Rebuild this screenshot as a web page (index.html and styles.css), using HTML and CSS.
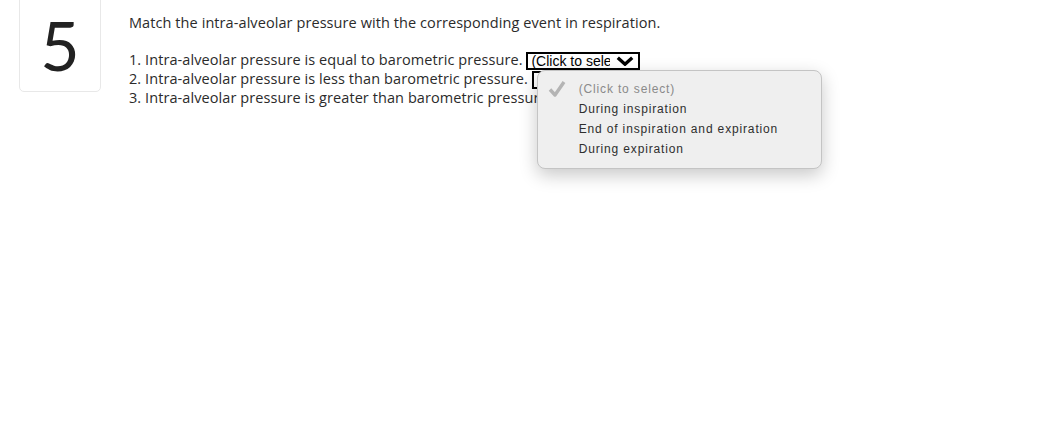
FILE: index.html
```html
<!DOCTYPE html>
<html>
<head>
<meta charset="utf-8">
<link rel="stylesheet" href="styles.css">
</head>
<body>
<div class="question">
  <div class="num-box"><span class="num">5</span></div>
  <div class="content">
    <p class="prompt">Match the intra-alveolar pressure with the corresponding event in respiration.</p>
    <div class="items">
      <div class="item">1. Intra-alveolar pressure is equal to barometric pressure. <span class="select"><span class="select-text">(Click to select)</span><svg class="chev" viewBox="0 0 18 10" width="18" height="10"><path d="M1.8 1.8 L9 8.2 L16.2 1.8" fill="none" stroke="#000" stroke-width="3.4"/></svg></span></div>
      <div class="item">2. Intra-alveolar pressure is less than barometric pressure. <span class="select-wrap"><span class="select"><span class="select-text">(Click to select)</span><svg class="chev" viewBox="0 0 18 10" width="18" height="10"><path d="M1.8 1.8 L9 8.2 L16.2 1.8" fill="none" stroke="#000" stroke-width="3.4"/></svg></span>
        <div class="menu">
          <div class="opt opt-selected"><svg class="check" viewBox="0 0 18 17" width="18" height="17"><path d="M2 9.5 L7 15 L16 2" fill="none" stroke="#b4b4b4" stroke-width="3.4" stroke-linejoin="round"/></svg>(Click to select)</div>
          <div class="opt">During inspiration</div>
          <div class="opt">End of inspiration and expiration</div>
          <div class="opt">During expiration</div>
        </div></span></div>
      <div class="item">3. Intra-alveolar pressure is greater than barometric pressure.</div>
    </div>
  </div>
</div>
</body>
</html>
```
FILE: styles.css
```css
html, body {
  margin: 0;
  padding: 0;
  background: #fff;
}
body {
  min-height: 444px;
  font-family: "Open Sans", Lato, sans-serif;
  color: #2b2b2b;
}
.question {
  display: flex;
  align-items: flex-start;
  gap: 28px;
  padding-left: 19px;
}
.num-box {
  box-sizing: border-box;
  width: 82px;
  height: 100px;
  margin-top: -8px;
  border: 1px solid #e8e8e8;
  border-radius: 5px;
  display: flex;
  justify-content: center;
  align-items: flex-start;
  flex-shrink: 0;
}
.num {
  font-family: Lato, sans-serif;
  font-size: 68px;
  line-height: 1;
  margin-top: 18px;
  color: #222;
  font-weight: 400;
}
.content {
  padding-top: 14px;
  font-size: 14.5px;
  letter-spacing: 0.08px;
}
.prompt {
  margin: 0 0 19px 0;
  line-height: 18px;
}
.item {
  line-height: 17.5px;
  white-space: nowrap;
}
.select-wrap {
  position: relative;
  display: inline-block;
  vertical-align: top;
}
.select {
  display: inline-flex;
  align-items: center;
  box-sizing: border-box;
  width: 114px;
  height: 18px;
  border: 2px solid #000;
  background: #fff;
  vertical-align: top;
  margin-top: 1px;
  font-family: "Liberation Sans", Arial, sans-serif;
  font-size: 14px;
  letter-spacing: 0;
  color: #000;
  padding-left: 3px;
  overflow: hidden;
  position: relative;
}
.select-text {
  flex: 1;
  overflow: hidden;
  white-space: nowrap;
  line-height: 14px;
}
.chev {
  flex-shrink: 0;
  margin: 0 4px 0 6px;
}
.menu {
  position: absolute;
  left: 5px;
  top: 0;
  width: 285px;
  box-sizing: border-box;
  padding: 8px 0 9px 0;
  background: #efefef;
  border: 1px solid #c4c4c4;
  border-radius: 8px;
  box-shadow: 0 6px 18px rgba(0, 0, 0, 0.22);
  font-family: "Liberation Sans", Arial, sans-serif;
  font-size: 12px;
  letter-spacing: 0.85px;
  color: #2e2e2e;
  z-index: 5;
}
.opt {
  position: relative;
  height: 20px;
  line-height: 20px;
  padding-left: 41px;
}
.opt-selected {
  color: #8a8a8a;
}
.check {
  position: absolute;
  left: 10px;
  top: 1px;
}
```
